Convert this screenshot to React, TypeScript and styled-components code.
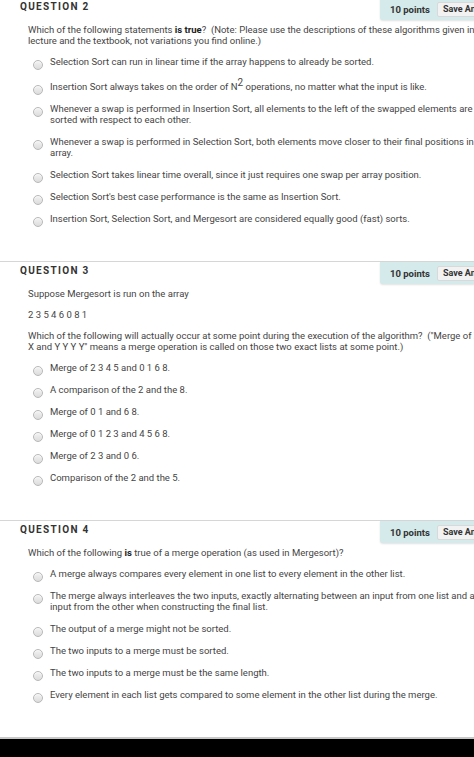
import React from "react";
import styled, { createGlobalStyle } from "styled-components";

const Global = createGlobalStyle`
  html, body {
    margin: 0;
    padding: 0;
    overflow: hidden;
    background: #ffffff;
  }
  body {
    font-family: Roboto, "Liberation Sans", Arial, sans-serif;
  }
`;

const Page = styled.div`
  width: 560px;
  height: 757px;
  display: flex;
  flex-direction: column;
  background: #fff;
`;

const Questions = styled.div`
  margin-top: -3px;
  display: flex;
  flex-direction: column;
`;

const Block = styled.section`
  border-top: 1px solid #d6d6d6;
  padding-bottom: 37px;
`;

const Header = styled.div`
  height: 22px;
  display: grid;
  grid-template-columns: 380px 1fr;
  align-items: start;
`;

const Title = styled.h2`
  margin: 0;
  padding: 3px 0 0 20px;
  font-size: 10px;
  line-height: 11px;
  font-weight: 700;
  letter-spacing: 1.3px;
  color: #333;
`;

const PointsBox = styled.div`
  height: 22px;
  display: flex;
  align-items: center;
  padding: 0 4px 0 10px;
  background: #d5eaea;
  border-bottom-left-radius: 3px;
  box-shadow: 0 1px 2px rgba(0, 0, 0, 0.12);
`;

const Points = styled.span`
  font-size: 9.5px;
  font-weight: 700;
  color: #333;
`;

const SaveButton = styled.button`
  margin-left: 7px;
  height: 15px;
  padding: 0 5px;
  font-family: Roboto, "Liberation Sans", Arial, sans-serif;
  font-size: 9px;
  font-weight: 700;
  color: #333;
  background: #f2f2f2;
  border: 1px solid #d9d9d9;
  border-radius: 2px;
  white-space: nowrap;
`;

const Body = styled.div`
  padding: 4px 0 0 28px;
  font-size: 9.5px;
  line-height: 11px;
  color: #454545;
`;

const Paragraph = styled.p`
  margin: 0 0 10px;
  white-space: nowrap;
  b {
    color: #222;
    font-weight: 700;
  }
`;

const OptionList = styled.div`
  margin: 2px 0 0 5px;
  display: flex;
  flex-direction: column;
  gap: 11px;
`;

const Option = styled.label<{ $raised?: boolean }>`
  display: flex;
  align-items: flex-start;
  gap: 7px;
  padding-top: ${(p) => (p.$raised ? "3px" : "0")};
  white-space: nowrap;
  sup {
    font-size: 10px;
    line-height: 0;
    vertical-align: 4px;
  }
`;

const Radio = styled.span`
  flex: 0 0 auto;
  width: 10px;
  height: 10px;
  margin-top: 3.5px;
  margin-bottom: -2.5px;
  box-sizing: border-box;
  border-radius: 50%;
  border: 1px solid #b8b8b8;
  background: linear-gradient(180deg, #f3f3f3 0%, #dcdcdc 100%);
  box-shadow: inset 0 1px 1px rgba(255, 255, 255, 0.7);
`;

const OptionText = styled.span`
  display: block;
`;

const Footer = styled.div`
  flex: 1;
  border-top: 2px solid #c8c8c8;
  background: #000;
`;

type Q = {
  n: number;
  paragraphs: React.ReactNode[];
  options: { text: React.ReactNode; raised?: boolean }[];
};

const questions: Q[] = [
  {
    n: 2,
    paragraphs: [
      <>
        Which of the following statements <b>is true</b>?&nbsp; (Note: Please use the descriptions of these
        algorithms given in the
        <br />
        lecture and the textbook, not variations you find online.)
      </>,
    ],
    options: [
      { text: "Selection Sort can run in linear time if the array happens to already be sorted." },
      {
        text: (
          <>
            Insertion Sort always takes on the order of N<sup>2</sup> operations, no matter what the input is like.
          </>
        ),
        raised: true,
      },
      {
        text: (
          <>
            Whenever a swap is performed in Insertion Sort, all elements to the left of the swapped elements are
            <br />
            sorted with respect to each other.
          </>
        ),
      },
      {
        text: (
          <>
            Whenever a swap is performed in Selection Sort, both elements move closer to their final positions in the
            <br />
            array.
          </>
        ),
      },
      { text: "Selection Sort takes linear time overall, since it just requires one swap per array position." },
      { text: "Selection Sort's best case performance is the same as Insertion Sort." },
      { text: "Insertion Sort, Selection Sort, and Mergesort are considered equally good (fast) sorts." },
    ],
  },
  {
    n: 3,
    paragraphs: [
      "Suppose Mergesort is run on the array",
      "2 3 5 4 6 0 8 1",
      <>
        Which of the following will actually occur at some point during the execution of the algorithm?&nbsp;
        ("Merge of X X X
        <br />
        X and Y Y Y Y" means a merge operation is called on those two exact lists at some point.)
      </>,
    ],
    options: [
      { text: "Merge of 2 3 4 5 and 0 1 6 8." },
      { text: "A comparison of the 2 and the 8." },
      { text: "Merge of 0 1 and 6 8." },
      { text: "Merge of 0 1 2 3 and 4 5 6 8." },
      { text: "Merge of 2 3 and 0 6." },
      { text: "Comparison of the 2 and the 5." },
    ],
  },
  {
    n: 4,
    paragraphs: [
      <>
        Which of the following <b>is</b> true of a merge operation (as used in Mergesort)?
      </>,
    ],
    options: [
      { text: "A merge always compares every element in one list to every element in the other list." },
      {
        text: (
          <>
            The merge always interleaves the two inputs, exactly alternating between an input from one list and an
            <br />
            input from the other when constructing the final list.
          </>
        ),
      },
      { text: "The output of a merge might not be sorted." },
      { text: "The two inputs to a merge must be sorted." },
      { text: "The two inputs to a merge must be the same length." },
      { text: "Every element in each list gets compared to some element in the other list during the merge." },
    ],
  },
];

export default function App() {
  return (
    <>
      <Global />
      <Page>
        <Questions>
          {questions.map((q) => (
            <Block key={q.n}>
              <Header>
                <Title>QUESTION {q.n}</Title>
                <PointsBox>
                  <Points>10 points</Points>
                  <SaveButton type="button">Save Answer</SaveButton>
                </PointsBox>
              </Header>
              <Body>
                {q.paragraphs.map((p, i) => (
                  <Paragraph key={i}>{p}</Paragraph>
                ))}
                <OptionList>
                  {q.options.map((o, i) => (
                    <Option key={i} $raised={o.raised}>
                      <Radio />
                      <OptionText>{o.text}</OptionText>
                    </Option>
                  ))}
                </OptionList>
              </Body>
            </Block>
          ))}
        </Questions>
        <Footer />
      </Page>
    </>
  );
}
